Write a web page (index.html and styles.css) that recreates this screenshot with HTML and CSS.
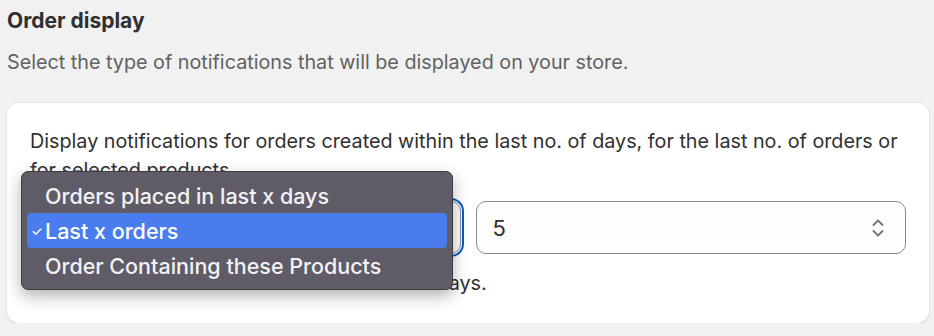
FILE: index.html
```html
<!DOCTYPE html>
<html lang="en">
<head>
    <meta charset="UTF-8">
    <meta name="viewport" content="width=device-width, initial-scale=1.0">
    <title>Order display</title>
    <link rel="stylesheet" href="styles.css">
</head>
<body>
    <div class="section">
        <h2 class="title">Order display</h2>
        <p class="subtitle">Select the type of notifications that will be displayed on your store.</p>

        <div class="card">
            <p class="desc">Display notifications for orders created within the last no. of days, for the last no. of orders or for selected products.</p>

            <div class="fields">
                <div class="field select_wrap">
                    <div class="select focused">
                        <span>Last x orders</span>
                    </div>

                    <ul class="menu">
                        <li>Orders placed in last x days</li>
                        <li class="active"><span class="check">&#10003;</span>Last x orders</li>
                        <li>Order Containing these Products</li>
                    </ul>
                </div>

                <div class="field">
                    <div class="number">
                        <span>5</span>
                        <svg class="spin" width="14" height="22" viewBox="0 0 14 22">
                            <path d="M2.5 8 L7 3.5 L11.5 8" fill="none" stroke="#7a7a7a" stroke-width="2" stroke-linecap="round" stroke-linejoin="round"/>
                            <path d="M2.5 14 L7 18.5 L11.5 14" fill="none" stroke="#7a7a7a" stroke-width="2" stroke-linecap="round" stroke-linejoin="round"/>
                        </svg>
                    </div>
                </div>
            </div>

            <p class="note">Note: We work with orders from the last 60 days.</p>
        </div>
    </div>
</body>
</html>
```

FILE: styles.css
```css
* {
    margin: 0;
    padding: 0;
    box-sizing: border-box;
}

body {
    background: #f1f1f1;
    font-family: Inter, "Noto Sans", sans-serif;
    color: #303030;
}

.section {
    padding: 8px 5px 0 7px;
}

.title {
    font-size: 21px;
    font-weight: 650;
    line-height: 26px;
    color: #303030;
}

.subtitle {
    margin-top: 16px;
    font-size: 19.75px;
    line-height: 24px;
    color: #616161;
}

.card {
    margin-top: 29px;
    width: 922px;
    height: 220px;
    background: #fff;
    border-radius: 12px;
    box-shadow: 0 1px 0 #d4d4d4, 0 0 0 1px #e6e6e6;
    padding: 24px 23px 0 23px;
}

.desc {
    font-size: 19.75px;
    line-height: 29px;
    height: 58px;
}

.fields {
    display: flex;
    gap: 15px;
    margin-top: 16px;
}

.field {
    flex: 1;
}

.select_wrap {
    position: relative;
}

.select, .number {
    height: 53px;
    border: 1px solid #8a8a8a;
    border-radius: 10px;
    background: #fdfdfd;
    display: flex;
    align-items: center;
    justify-content: space-between;
    padding: 0 20px 0 16px;
    font-size: 22px;
}

.select.focused {
    outline: 2px solid #005bd3;
    outline-offset: 1px;
}

.menu {
    position: absolute;
    top: -30px;
    left: -9px;
    width: 432px;
    list-style: none;
    background: #5f5c68;
    border: 1px solid #3e3c44;
    border-radius: 7px;
    box-shadow: 0 6px 16px rgba(0, 0, 0, 0.3);
    padding: 6px 5px;
    color: #f2f2f4;
    font-size: 21.5px;
    font-weight: 500;
}

.menu li {
    height: 35px;
    line-height: 36px;
    padding-left: 18px;
    border-radius: 4px;
    position: relative;
}

.menu li.active {
    background: #4a7ced;
    color: #fff;
}

.check {
    position: absolute;
    left: 4px;
    font-size: 13px;
}

.note {
    margin-top: 15px;
    font-size: 19.75px;
    line-height: 29px;
}
```
